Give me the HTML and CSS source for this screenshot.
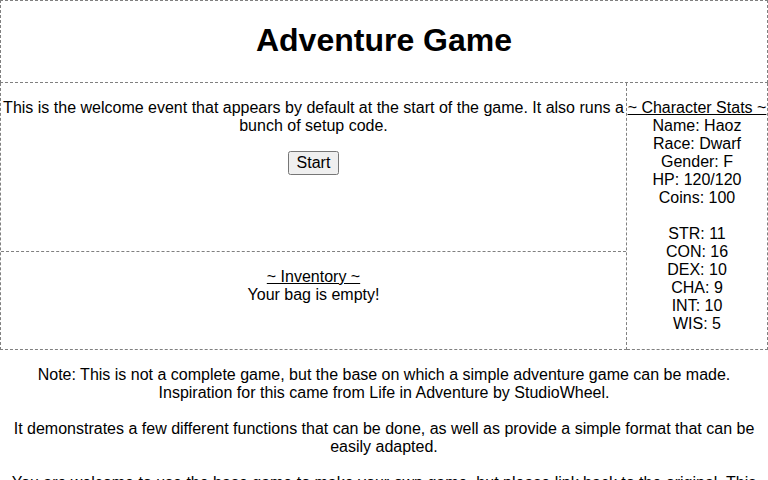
FILE: index.html
```html
<!DOCTYPE html>
<html lang="en">
<head>
<meta charset="utf-8">
<title>Adventure Game</title>
<link rel="stylesheet" href="styles.css">
</head>
<body>
  <header class="title-box">
    <h1>Adventure Game</h1>
  </header>

  <main class="game-row">
    <div class="left-col">
      <section class="event-box">
        <p>This is the welcome event that appears by default at the start of the game. It also runs a bunch of setup code.</p>
        <button class="start-btn" type="button">Start</button>
      </section>
      <section class="inventory-box">
        <p><span class="heading">~ Inventory ~</span><br>Your bag is empty!</p>
      </section>
    </div>
    <aside class="stats-box">
      <p>
        <span class="heading">~ Character Stats ~</span><br>
        Name: Haoz<br>
        Race: Dwarf<br>
        Gender: F<br>
        HP: 120/120<br>
        Coins: 100<br>
        <br>
        STR: 11<br>
        CON: 16<br>
        DEX: 10<br>
        CHA: 9<br>
        INT: 10<br>
        WIS: 5
      </p>
    </aside>
  </main>

  <footer class="notes">
    <p>Note: This is not a complete game, but the base on which a simple adventure game can be made. Inspiration for this came from Life in Adventure by StudioWheel.<br><br>It demonstrates a few different functions that can be done, as well as provide a simple format that can be easily adapted.<br><br>You are welcome to use the base game to make your own game, but please link back to the original. This would be greatly appreciated.</p>
  </footer>
</body>
</html>
```

FILE: styles.css
```css
html, body {
  margin: 0;
  padding: 0;
  background: #fff;
}

body {
  font-family: "Liberation Sans", Arial, sans-serif;
  font-size: 16px;
  line-height: 18px;
  color: #000;
  text-align: center;
}

p {
  margin: 16px 0;
}

.title-box {
  border: 1px dashed #808080;
}

.title-box h1 {
  margin: 21px 0 23px;
  font-size: 32px;
  line-height: 37px;
  font-weight: bold;
}

.game-row {
  display: flex;
  align-items: stretch;
}

.left-col {
  flex: 1;
  display: flex;
  flex-direction: column;
  border-left: 1px dashed #808080;
  border-right: 1px dashed #808080;
  border-bottom: 1px dashed #808080;
}

.event-box {
  height: 168px;
  border-bottom: 1px dashed #808080;
  padding: 0 2px;
}

.start-btn {
  font-family: inherit;
  font-size: 16px;
  line-height: 18px;
  margin: 0;
  padding: 1px 7px;
}

.inventory-box {
  flex: 1;
}

.stats-box {
  width: 140px;
  border-right: 1px dashed #808080;
  border-bottom: 1px dashed #808080;
}

.heading {
  text-decoration: underline;
}

.notes {
  padding: 0 8px;
}
```
